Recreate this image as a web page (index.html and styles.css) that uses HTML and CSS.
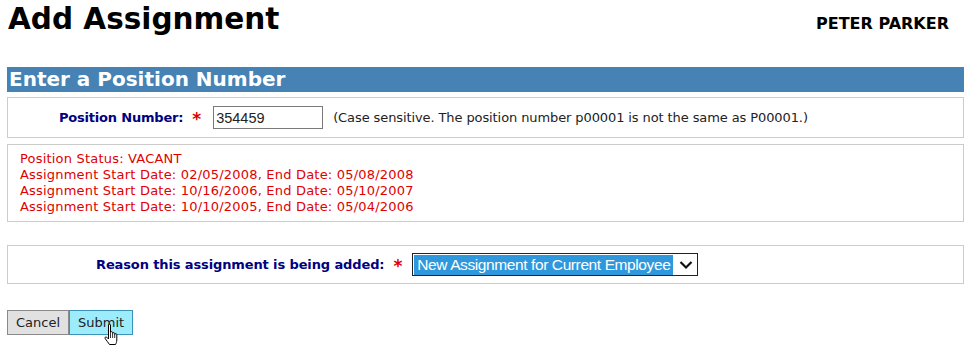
FILE: index.html
```html
<!DOCTYPE html>
<html>
<head>
<meta charset="utf-8">
<link rel="stylesheet" href="styles.css">
</head>
<body>
<div class="page">
  <div class="title-row">
    <h1 class="title">Add Assignment</h1>
    <div class="user">PETER PARKER</div>
  </div>

  <div class="section-bar">Enter a Position Number</div>

  <div class="box box-position">
    <span class="label label-pos">Position Number:</span>
    <span class="req">*</span>
    <input class="text-input" type="text" value="354459">
    <span class="hint">(Case sensitive. The position number p00001 is not the same as P00001.)</span>
  </div>

  <div class="box box-status">
    <div>Position Status: VACANT</div>
    <div>Assignment Start Date: 02/05/2008, End Date: 05/08/2008</div>
    <div>Assignment Start Date: 10/16/2006, End Date: 05/10/2007</div>
    <div>Assignment Start Date: 10/10/2005, End Date: 05/04/2006</div>
  </div>

  <div class="box box-reason">
    <span class="label label-reason">Reason this assignment is being added:</span>
    <span class="req">*</span>
    <div class="fake-select">
      <span class="selected-text">New Assignment for Current Employee</span>
      <svg class="chevron" width="14" height="10" viewBox="0 0 14 10"><path d="M1.5 2 L7 7.5 L12.5 2" fill="none" stroke="#111" stroke-width="2.2"/></svg>
    </div>
  </div>

  <div class="buttons">
    <button class="btn btn-cancel">Cancel</button>
    <button class="btn btn-submit">Submit</button>
    <svg class="cursor" width="18" height="24" viewBox="0 0 18 24"><path d="M4.5 2 C4.5 0.9 6.5 0.9 6.5 2 V9.5 C6.5 8.4 8.6 8.4 8.6 9.5 V10.5 C8.6 9.4 10.7 9.4 10.7 10.5 V11.5 C10.7 10.4 12.8 10.4 12.8 11.5 V17 C12.8 19 12 20.5 11.5 21.5 H5.5 C4.5 20 2.5 17.5 1.2 15.6 C0.5 14.6 1.6 13.3 2.7 14.2 L4.5 16 Z" fill="#fff" stroke="#000" stroke-width="1" stroke-linejoin="round"/><path d="M6.5 10 V15 M8.6 10.5 V15 M10.7 11.5 V15" stroke="#000" stroke-width="0.8" fill="none"/></svg>
  </div>
</div>
</body>
</html>
```
FILE: styles.css
```css
* { box-sizing: border-box; }
html, body {
  min-height: 360px;
}
body {
  margin: 0;
  background: #fff;
  font-family: "DejaVu Sans", Verdana, sans-serif;
}
.page {
  width: 964px;
  min-height: 360px;
  padding: 2px 0 0 7px;
  position: relative;
}
.title-row {
  display: flex;
  justify-content: space-between;
  align-items: baseline;
  height: 65px;
}
.title {
  margin: 0 0 0 1px;
  font-size: 29.5px;
  font-weight: bold;
  color: #000;
  line-height: 35px;
}
.user {
  font-size: 16px;
  font-weight: bold;
  color: #000;
  margin-right: 15px;
}
.section-bar {
  background: #4682b4;
  color: #fff;
  font-weight: bold;
  font-size: 20px;
  height: 25px;
  line-height: 25px;
  padding-left: 2px;
}
.box {
  border: 1px solid #cccccc;
  font-size: 13px;
}
.box-position {
  margin-top: 5px;
  height: 41px;
  display: flex;
  align-items: center;
  padding-left: 51px;
}
.label {
  color: #000080;
  font-weight: bold;
}
.label-pos { letter-spacing: -0.2px; }
.label-reason { letter-spacing: -0.12px; }
.req {
  color: #e00000;
  font-weight: bold;
  font-size: 17px;
  margin-left: 9px;
  position: relative;
  top: 1px;
}
.text-input {
  margin-left: 12px;
  width: 110px;
  height: 23px;
  border: 1px solid #7a7a7a;
  font-family: "Liberation Sans", Arial, sans-serif;
  font-size: 14.5px;
  padding: 0 2px;
  color: #222;
}
.hint {
  margin-left: 10px;
  color: #222;
  letter-spacing: -0.1px;
}
.box-status {
  margin-top: 6px;
  color: #e00000;
  line-height: 16px;
  padding: 6px 12px 6px;
  letter-spacing: 0.2px;
}
.box-reason {
  margin-top: 23px;
  height: 39px;
  display: flex;
  align-items: center;
  padding-left: 88px;
}
.fake-select {
  margin-left: 10px;
  width: 286px;
  height: 23px;
  border: 1px solid #222;
  display: flex;
  align-items: center;
  padding: 0 4px 0 1px;
  justify-content: space-between;
}
.selected-text {
  background: #2f97db;
  color: #fff;
  font-family: "Liberation Sans", Arial, sans-serif;
  font-size: 15.5px;
  height: 20px;
  line-height: 20px;
  padding: 0 3px;
  letter-spacing: -0.4px;
}
.chevron { display: block; }
.buttons {
  margin-top: 26px;
  display: flex;
  position: relative;
}
.btn {
  font-family: "DejaVu Sans", Verdana, sans-serif;
  font-size: 13px;
  height: 25px;
  padding: 0 8px;
  color: #222;
  margin: 0;
}
.btn-cancel {
  background: #e1e1e1;
  border: 1px solid #8a8a8a;
  width: 62px;
}
.btn-submit {
  background: #9cecfb;
  border: 1px solid #3c93b8;
  width: 64px;
}
.cursor {
  position: absolute;
  left: 97px;
  top: 13px;
  z-index: 2;
}
```
